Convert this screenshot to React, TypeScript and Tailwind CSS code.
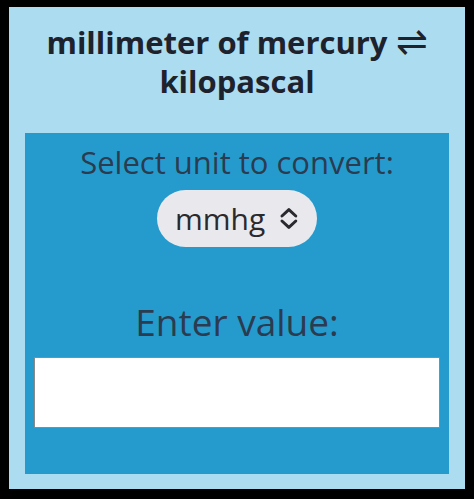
import React from "react";

export default function App() {
  return (
    <div
      className="bg-black h-[499px] w-[474px] pt-[7px] pl-[9px] pr-[9px] pb-[10px]"
      style={{ fontFamily: '"Open Sans", "DejaVu Sans", sans-serif' }}
    >
      <div className="bg-[#acdcf0] h-full flex flex-col px-4 pb-[15px]">
        <h1 className="pt-[16px] pb-[32px] text-center text-[31px] leading-[39px] font-bold text-[#1e222d]">
          millimeter of mercury{" "}
          <span
            className="font-extralight text-[38px] leading-[0]"
            style={{ fontFamily: '"DejaVu Sans", sans-serif' }}
          >
            ⇌
          </span>
          <br />
          kilopascal
        </h1>
        <div className="flex-1 bg-[#259bcd] flex flex-col items-center pt-[9px] px-[9px]">
          <div className="text-[31px] leading-[40px] text-[#2b3b50]">Select unit to convert:</div>
          <div className="mt-[8px] h-[57px] w-[160px] rounded-full bg-[#e9e9ed] flex items-center pl-[18px] pr-[18px] gap-[14px]">
            <span className="text-[30px] leading-[40px] text-[#2a2a2e]">mmhg</span>
            <svg width="20" height="23" viewBox="0 0 20 23" fill="none" stroke="#2a2a2e" strokeWidth="3" strokeLinecap="round" strokeLinejoin="round">
              <path d="M3 9 L10 2.5 L17 9" />
              <path d="M3 14 L10 20.5 L17 14" />
            </svg>
          </div>
          <div className="mt-[51px] text-[37px] leading-[48px] text-[#2b3b50]">Enter value:</div>
          <input
            type="text"
            className="mt-[11px] w-full h-[71px] bg-white border border-[#8a8a8a] outline-none"
          />
        </div>
      </div>
    </div>
  );
}
